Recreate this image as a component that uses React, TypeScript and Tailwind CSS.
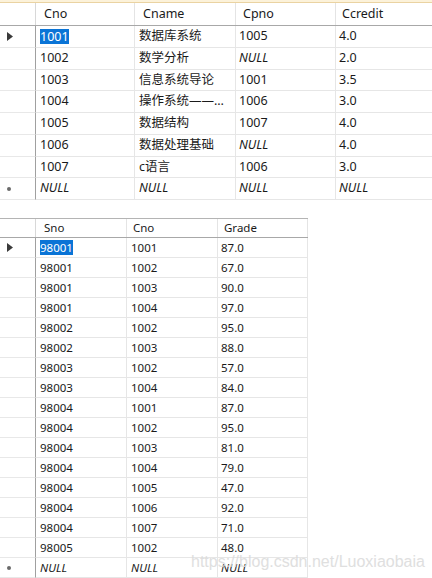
import React from "react";

type Cell = { t: string; null?: boolean; sel?: boolean };

const n = (t: string): Cell => ({ t });
const NUL: Cell = { t: "NULL", null: true };

const courses: Cell[][] = [
  [{ t: "1001", sel: true }, n("数据库系统"), n("1005"), n("4.0")],
  [n("1002"), n("数学分析"), NUL, n("2.0")],
  [n("1003"), n("信息系统导论"), n("1001"), n("3.5")],
  [n("1004"), n("操作系统——…"), n("1006"), n("3.0")],
  [n("1005"), n("数据结构"), n("1007"), n("4.0")],
  [n("1006"), n("数据处理基础"), NUL, n("4.0")],
  [n("1007"), n("c语言"), n("1006"), n("3.0")],
];

const scRaw: [string, string, string][] = [
  ["98001", "1001", "87.0"],
  ["98001", "1002", "67.0"],
  ["98001", "1003", "90.0"],
  ["98001", "1004", "97.0"],
  ["98002", "1002", "95.0"],
  ["98002", "1003", "88.0"],
  ["98003", "1002", "57.0"],
  ["98003", "1004", "84.0"],
  ["98004", "1001", "87.0"],
  ["98004", "1002", "95.0"],
  ["98004", "1003", "81.0"],
  ["98004", "1004", "79.0"],
  ["98004", "1005", "47.0"],
  ["98004", "1006", "92.0"],
  ["98004", "1007", "71.0"],
  ["98005", "1002", "48.0"],
];

const FONT = { fontFamily: '"Noto Sans", "Noto Sans CJK SC", sans-serif' };

function Arrow() {
  return (
    <svg width="6" height="9" viewBox="0 0 6 9" className="block">
      <path d="M0 0 L6 4.5 L0 9 Z" fill="#3a3a3a" />
    </svg>
  );
}

function Star() {
  return <div className="w-[4px] h-[4px] rounded-full bg-[#6a6a6a]" />;
}

function Grid({
  widths,
  headers,
  rows,
  rowH,
  headH,
  fontPx,
  headPad,
  cellPad,
}: {
  widths: number[];
  headers: string[];
  rows: Cell[][];
  rowH: number;
  headH: number;
  fontPx: number;
  headPad: number[];
  cellPad: number[];
}) {
  const all = [...rows, headers.map(() => NUL)];
  return (
    <div className="flex flex-col text-[#1a1a1a]" style={{ ...FONT, fontSize: fontPx }}>
      <div className="flex border-b border-[#a8a8a8]" style={{ height: headH }}>
        <div className="shrink-0 border-r border-[#d8d8d8]" style={{ width: widths[0] }} />
        {headers.map((h, i) => (
          <div
            key={i}
            className="shrink-0 flex items-center border-r border-[#e4e4e4]"
            style={{ width: widths[i + 1], paddingLeft: headPad[i] }}
          >
            {h}
          </div>
        ))}
      </div>
      {all.map((r, ri) => (
        <div key={ri} className="flex" style={{ height: rowH }}>
          <div
            className="shrink-0 flex items-center border-r border-b border-r-[#a0a0a0] border-b-[#e8e8e8] pl-[7px]"
            style={{ width: widths[0] }}
          >
            {ri === 0 ? <Arrow /> : ri === all.length - 1 ? <Star /> : null}
          </div>
          {r.map((c, ci) => (
            <div
              key={ci}
              className="shrink-0 flex items-center border-r border-b border-[#e6e6e6] overflow-hidden whitespace-nowrap"
              style={{ width: widths[ci + 1], paddingLeft: cellPad[ci] }}
            >
              {c.sel ? (
                <span className="bg-[#0a74d6] text-white leading-[15px]">{c.t}</span>
              ) : c.null ? (
                <span className="italic">{c.t}</span>
              ) : (
                <span>{c.t}</span>
              )}
            </div>
          ))}
        </div>
      ))}
    </div>
  );
}

export default function App() {
  const scRows: Cell[][] = scRaw.map((r, i) =>
    i === 0 ? [{ t: r[0], sel: true }, n(r[1]), n(r[2])] : r.map(n)
  );
  return (
    <div className="relative w-[432px] h-[578px] bg-white overflow-hidden">
      <div className="h-[2px] bg-[#fcf2da]" />
      <div className="h-px bg-[#ead3a2]" />
      <div className="w-[432px]">
        <Grid
          widths={[36, 99, 101, 100, 97]}
          headers={["Cno", "Cname", "Cpno", "Ccredit"]}
          rows={courses}
          rowH={21.75}
          headH={23}
          fontPx={12.5}
          headPad={[8, 8, 7, 6]}
          cellPad={[4, 4, 3, 3]}
        />
      </div>
      <div className="h-[18px]" />
      <div className="w-[308px] border-t border-[#b4b4b4]">
        <Grid
          widths={[36, 91, 91, 90]}
          headers={["Sno", "Cno", "Grade"]}
          rows={scRows}
          rowH={20}
          headH={19}
          fontPx={11.5}
          headPad={[8, 6, 6]}
          cellPad={[4, 4, 3]}
        />
      </div>
      <div
        className="absolute left-[191px] top-[550px] text-[16px] text-[#dcdcdc] whitespace-nowrap pointer-events-none"
        style={{ fontFamily: '"Liberation Sans", Arial, sans-serif', opacity: 0.9 }}
      >
        https://blog.csdn.net/Luoxiaobaia
      </div>
    </div>
  );
}
